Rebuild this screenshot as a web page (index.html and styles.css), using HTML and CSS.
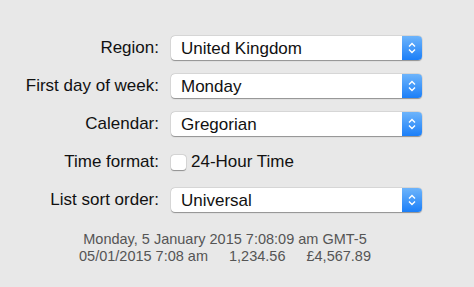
FILE: index.html
```html
<!DOCTYPE html>
<html>
<head>
    <title>Language &amp; Region</title>
    <link rel="stylesheet" href="styles.css">
</head>
<body>
    <div class="prefs">
        <div class="form">
            <label class="label">Region:</label>
            <div class="popup">
                <span class="popup-text">United Kingdom</span>
                <span class="stepper"><svg width="10" height="14" viewBox="0 0 10 14"><path d="M2 5.5 L5 2.5 L8 5.5 M2 8.5 L5 11.5 L8 8.5" fill="none" stroke="#fff" stroke-width="1.4"/></svg></span>
            </div>

            <label class="label">First day of week:</label>
            <div class="popup">
                <span class="popup-text">Monday</span>
                <span class="stepper"><svg width="10" height="14" viewBox="0 0 10 14"><path d="M2 5.5 L5 2.5 L8 5.5 M2 8.5 L5 11.5 L8 8.5" fill="none" stroke="#fff" stroke-width="1.4"/></svg></span>
            </div>

            <label class="label">Calendar:</label>
            <div class="popup">
                <span class="popup-text">Gregorian</span>
                <span class="stepper"><svg width="10" height="14" viewBox="0 0 10 14"><path d="M2 5.5 L5 2.5 L8 5.5 M2 8.5 L5 11.5 L8 8.5" fill="none" stroke="#fff" stroke-width="1.4"/></svg></span>
            </div>

            <label class="label">Time format:</label>
            <div class="check-row">
                <span class="checkbox"></span>
                <span>24-Hour Time</span>
            </div>

            <label class="label">List sort order:</label>
            <div class="popup">
                <span class="popup-text">Universal</span>
                <span class="stepper"><svg width="10" height="14" viewBox="0 0 10 14"><path d="M2 5.5 L5 2.5 L8 5.5 M2 8.5 L5 11.5 L8 8.5" fill="none" stroke="#fff" stroke-width="1.4"/></svg></span>
            </div>
        </div>

        <div class="sample">
            <div>Monday, 5 January 2015 7:08:09 am GMT-5</div>
            <div class="sample-row">
                <span>05/01/2015 7:08 am</span>
                <span>1,234.56</span>
                <span>£4,567.89</span>
            </div>
        </div>
    </div>
</body>
</html>
```

FILE: styles.css
```css
body {
    margin: 0;
    background-color: #e8e8e8;
    font-family: 'Liberation Sans', Arial, sans-serif;
    color: #111;
}
.prefs {
    width: 474px;
    height: 287px;
    padding-top: 36px;
    box-sizing: border-box;
}
.form {
    display: grid;
    grid-template-columns: 159px 251px;
    grid-auto-rows: 24px;
    column-gap: 12px;
    row-gap: 14px;
    font-size: 17px;
}
.label {
    display: flex;
    align-items: center;
    justify-content: flex-end;
}
.popup {
    display: flex;
    align-items: stretch;
    background-color: #fff;
    border-radius: 4px;
    box-shadow: 0 0.5px 1px rgba(0, 0, 0, 0.35), 0 0 0 0.5px rgba(0, 0, 0, 0.08);
    overflow: hidden;
}
.popup-text {
    flex-grow: 1;
    display: flex;
    align-items: center;
    padding-left: 10px;
    padding-top: 1px;
    color: #111;
}
.stepper {
    width: 20px;
    display: flex;
    align-items: center;
    justify-content: center;
    background: linear-gradient(#6db4fb, #1c7ff8);
}
.check-row {
    display: flex;
    align-items: center;
    gap: 5px;
}
.checkbox {
    width: 15px;
    height: 15px;
    background-color: #fff;
    border-radius: 3px;
    box-shadow: 0 0.5px 1px rgba(0, 0, 0, 0.35), 0 0 0 0.5px rgba(0, 0, 0, 0.1);
}
.sample {
    margin-top: 19px;
    padding-right: 24px;
    text-align: center;
    font-size: 14.5px;
    line-height: 17px;
    color: #555;
}
.sample-row {
    display: flex;
    justify-content: center;
    gap: 21px;
}
```
